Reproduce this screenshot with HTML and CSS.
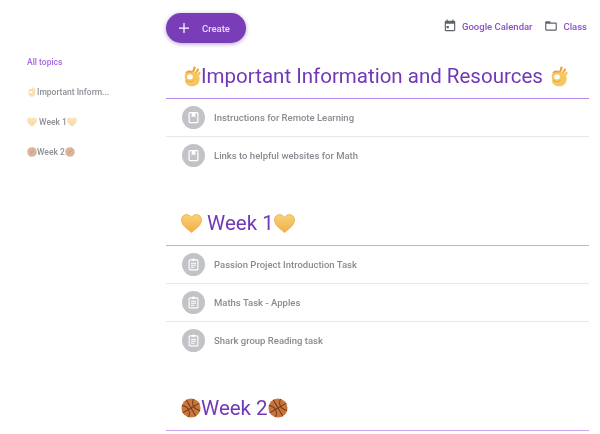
FILE: index.html
```html
<!DOCTYPE html>
<html lang="en">
<head>
    <meta charset="UTF-8">
    <meta name="viewport" content="width=device-width, initial-scale=1.0">
    <title>Classwork</title>
    <link rel="stylesheet" href="styles.css">
</head>
<body>
    <svg class="defs" width="0" height="0">
        <defs>
            <linearGradient id="heart-fill" x1="0" y1="0" x2="0" y2="1">
                <stop offset="0" stop-color="#f8d277"/>
                <stop offset="1" stop-color="#f0ae48"/>
            </linearGradient>
        </defs>
        <symbol id="ok" viewBox="0 0 17 21">
            <path fill="none" stroke="#ee9f3c" stroke-width="2.200" stroke-linecap="round" d="M8.500 6.500C9.500 5 10.500 3.500 10.500 1.500"/>
            <path fill="none" stroke="#f3ad45" stroke-width="2.200" stroke-linecap="round" d="M11.500 7.500C12.500 6 13.300 5 14 3.500"/>
            <path fill="none" stroke="#f6bd55" stroke-width="2.200" stroke-linecap="round" d="M13.500 9.500c.8-.8 1.500-1.500 2-2.500"/>
            <path fill="#f7c660" d="M2 6.500C3.500 4.500 7 4.500 9.500 6c2 1 4.500 1.500 5.500 3.500 1.300 3 .8 6.500-1.500 8.800-2.300 2.200-6 2.700-9 1.200C1.500 18 .5 15.500 1.200 13 .3 11 .6 8.300 2 6.500z"/>
            <path fill="#ee9f3c" d="M1.500 6.500C3 4.300 6.500 4 8.500 5.500l-.6 1.300C6 5.800 3.700 6 2.500 7.500z"/>
            <ellipse cx="6" cy="10.800" rx="2.900" ry="2.600" fill="#fff"/>
            <path fill="none" stroke="#e6953a" stroke-width=".8" d="M2.500 14.500c2.500 1.800 6 1.400 7.500-.8"/>
        </symbol>
        <symbol id="heart" viewBox="0 0 21 19">
            <path fill="url(#heart-fill)" stroke="#ecaa4a" stroke-width=".8" d="M10.500 18.500C5 14 .5 10.800.5 6 .5 2.800 2.900.6 5.600.6c2 0 3.900 1.200 4.900 3 1-1.800 2.900-3 4.900-3 2.700 0 5.100 2.200 5.100 5.400 0 4.800-4.500 8-10 12.500z"/>
        </symbol>
        <symbol id="ball" viewBox="0 0 24 24">
            <circle cx="12" cy="12" r="11.500" fill="#c9763c"/>
            <g fill="none" stroke="#6b3517" stroke-width="1.100" transform="rotate(-30 12 12)">
                <path d="M12 .5v23M.5 12h23M4 4c3.500 3 4.500 5 4.500 8s-1 5-4.500 8M20 4c-3.500 3-4.500 5-4.500 8s1 5 4.500 8"/>
            </g>
        </symbol>
        <symbol id="material" viewBox="0 0 24 24">
            <path fill="none" stroke="#fff" stroke-width="2" d="M6.500 4h11A1.500 1.500 0 0 1 19 5.500v13a1.500 1.500 0 0 1-1.500 1.500h-11A1.500 1.500 0 0 1 5 18.500v-13A1.500 1.500 0 0 1 6.500 4z"/>
            <path fill="#fff" d="M9 4h6v8l-3-2-3 2z"/>
        </symbol>
        <symbol id="task" viewBox="0 0 24 24">
            <path fill="none" stroke="#fff" stroke-width="1.800" d="M6.500 4.500h11A1.500 1.500 0 0 1 19 6v13a1.500 1.500 0 0 1-1.500 1.500h-11A1.500 1.500 0 0 1 5 19V6a1.500 1.500 0 0 1 1.500-1.500z"/>
            <path fill="#fff" d="M9.500 3h1.200a1.400 1.400 0 0 1 2.600 0h1.200v3h-5zM8 9h8v1.600H8zm0 3.200h8v1.600H8zm0 3.200h5.500V17H8z"/>
        </symbol>
    </svg>

    <div class="page">
        <nav class="sidebar">
            <a class="topic active">All topics</a>
            <a class="topic"><svg class="emoji"><use href="#ok"/></svg><span class="topic-name">Important Inform...</span></a>
            <a class="topic"><svg class="emoji"><use href="#heart"/></svg><span class="topic-name">&nbsp;Week 1</span><svg class="emoji"><use href="#heart"/></svg></a>
            <a class="topic"><svg class="emoji"><use href="#ball"/></svg><span class="topic-name">Week 2</span><svg class="emoji"><use href="#ball"/></svg></a>
        </nav>

        <main class="content">
            <div class="toolbar">
                <button class="btn-create">
                    <svg class="plus" viewBox="0 0 12 12"><path d="M5.250 0h1.500v5.250H12v1.500H6.750V12h-1.500V6.750H0v-1.500h5.250z"/></svg>
                    Create
                </button>
                <div class="links">
                    <a class="link">
                        <svg viewBox="0 0 24 24"><path d="M10 12H6v4h4zM16 1v2H8V1H6v2H5c-1.110 0-1.990.9-1.990 2L3 19c0 1.100.89 2 2 2h14c1.100 0 2-.9 2-2V5c0-1.100-.9-2-2-2h-1V1zm3 18H5V8h14z"/></svg>
                        Google Calendar
                    </a>
                    <a class="link">
                        <svg viewBox="0 0 24 24"><path d="M20 6h-8l-2-2H4c-1.100 0-1.990.9-1.990 2L2 18c0 1.100.9 2 2 2h16c1.100 0 2-.9 2-2V8c0-1.100-.9-2-2-2zm0 12H4V8h16z"/></svg>
                        Class
                    </a>
                </div>
            </div>

            <section class="section">
                <h2 class="section-title"><svg class="emoji-ok"><use href="#ok"/></svg>Important Information and Resources <svg class="emoji-ok"><use href="#ok"/></svg></h2>
                <div class="item"><span class="item-icon"><svg><use href="#material"/></svg></span>Instructions for Remote Learning</div>
                <div class="item"><span class="item-icon"><svg><use href="#material"/></svg></span>Links to helpful websites for Math</div>
            </section>

            <section class="section">
                <h2 class="section-title"><svg class="emoji-heart"><use href="#heart"/></svg> Week 1<svg class="emoji-heart"><use href="#heart"/></svg></h2>
                <div class="item"><span class="item-icon"><svg><use href="#task"/></svg></span>Passion Project Introduction Task</div>
                <div class="item"><span class="item-icon"><svg><use href="#task"/></svg></span>Maths Task - Apples</div>
                <div class="item"><span class="item-icon"><svg><use href="#task"/></svg></span>Shark group Reading task</div>
            </section>

            <section class="section">
                <h2 class="section-title"><svg class="emoji-ball"><use href="#ball"/></svg>Week 2<svg class="emoji-ball"><use href="#ball"/></svg></h2>
            </section>
        </main>
    </div>
</body>
</html>
```

FILE: styles.css
```css
html, body {
    height: 100%;
    overflow: hidden;
}
body {
    margin: 0;
    background-color: white;
    font-family: Roboto, "Liberation Sans", sans-serif;
}
.defs {
    display: block;
    height: 0;
}
.page {
    display: flex;
    height: 434px;
    filter: blur(0.35px);
}
.sidebar {
    width: 139px;
    padding: 52px 0 0 27px;
    display: flex;
    flex-direction: column;
    flex-shrink: 0;
}
.topic {
    height: 30px;
    display: flex;
    align-items: center;
    font-size: 8.5px;
    font-weight: 500;
    color: #8e9196;
    white-space: nowrap;
}
.topic.active {
    height: 20px;
    color: #a566e6;
    margin-bottom: 5px;
}
.emoji {
    width: 10px;
    height: 10px;
    flex-shrink: 0;
    opacity: 0.5;
}
.content {
    width: 423px;
    flex-shrink: 0;
}
.toolbar {
    height: 54px;
    display: flex;
    justify-content: space-between;
    align-items: flex-start;
}
.btn-create {
    margin-top: 13px;
    width: 80px;
    height: 30px;
    padding: 0 0 0 13px;
    display: flex;
    align-items: center;
    gap: 13px;
    background-color: #7a3db8;
    color: #e8dcf5;
    border: none;
    border-radius: 15px;
    box-shadow: 0 1px 4px rgba(90, 40, 150, 0.45);
    font-family: inherit;
    font-size: 9.5px;
    font-weight: 500;
}
.plus {
    width: 10px;
    height: 10px;
    fill: white;
}
.links {
    margin-top: 19px;
    margin-right: 2px;
    display: flex;
    gap: 12px;
}
.link {
    display: flex;
    align-items: center;
    gap: 5px;
    font-size: 9.5px;
    font-weight: 500;
    color: #8a50c8;
}
.link svg {
    width: 14px;
    height: 14px;
    fill: #5f6368;
}
.section {
    margin-bottom: 26px;
}
.section:last-child {
    margin-bottom: 0;
}
.section-title {
    margin: 0;
    height: 44px;
    padding-left: 15px;
    display: flex;
    align-items: center;
    white-space: pre;
    border-bottom: 1px solid #b98ae8;
    font-size: 20.5px;
    font-weight: 400;
    color: #7139b5;
}
.section + .section .section-title {
    border-bottom-color: #c9a8ee;
}
.emoji-ok {
    width: 17px;
    height: 21px;
    margin-left: 3px;
    flex-shrink: 0;
}
.emoji-heart {
    width: 21px;
    height: 19px;
    flex-shrink: 0;
}
.emoji-ball {
    width: 20px;
    height: 20px;
    flex-shrink: 0;
}
.item {
    box-sizing: border-box;
    height: 38px;
    padding-left: 15px;
    display: flex;
    align-items: center;
    gap: 9px;
    border-bottom: 1px solid #e8e8ea;
    font-size: 9.5px;
    font-weight: 500;
    color: #888b90;
}
.item:last-child {
    border-bottom: none;
    padding-bottom: 1px;
}
.item-icon {
    width: 23px;
    height: 23px;
    margin-left: 1px;
    display: flex;
    align-items: center;
    justify-content: center;
    background-color: #c2c3c6;
    border-radius: 50%;
}
.item-icon svg {
    width: 15px;
    height: 15px;
}
```
